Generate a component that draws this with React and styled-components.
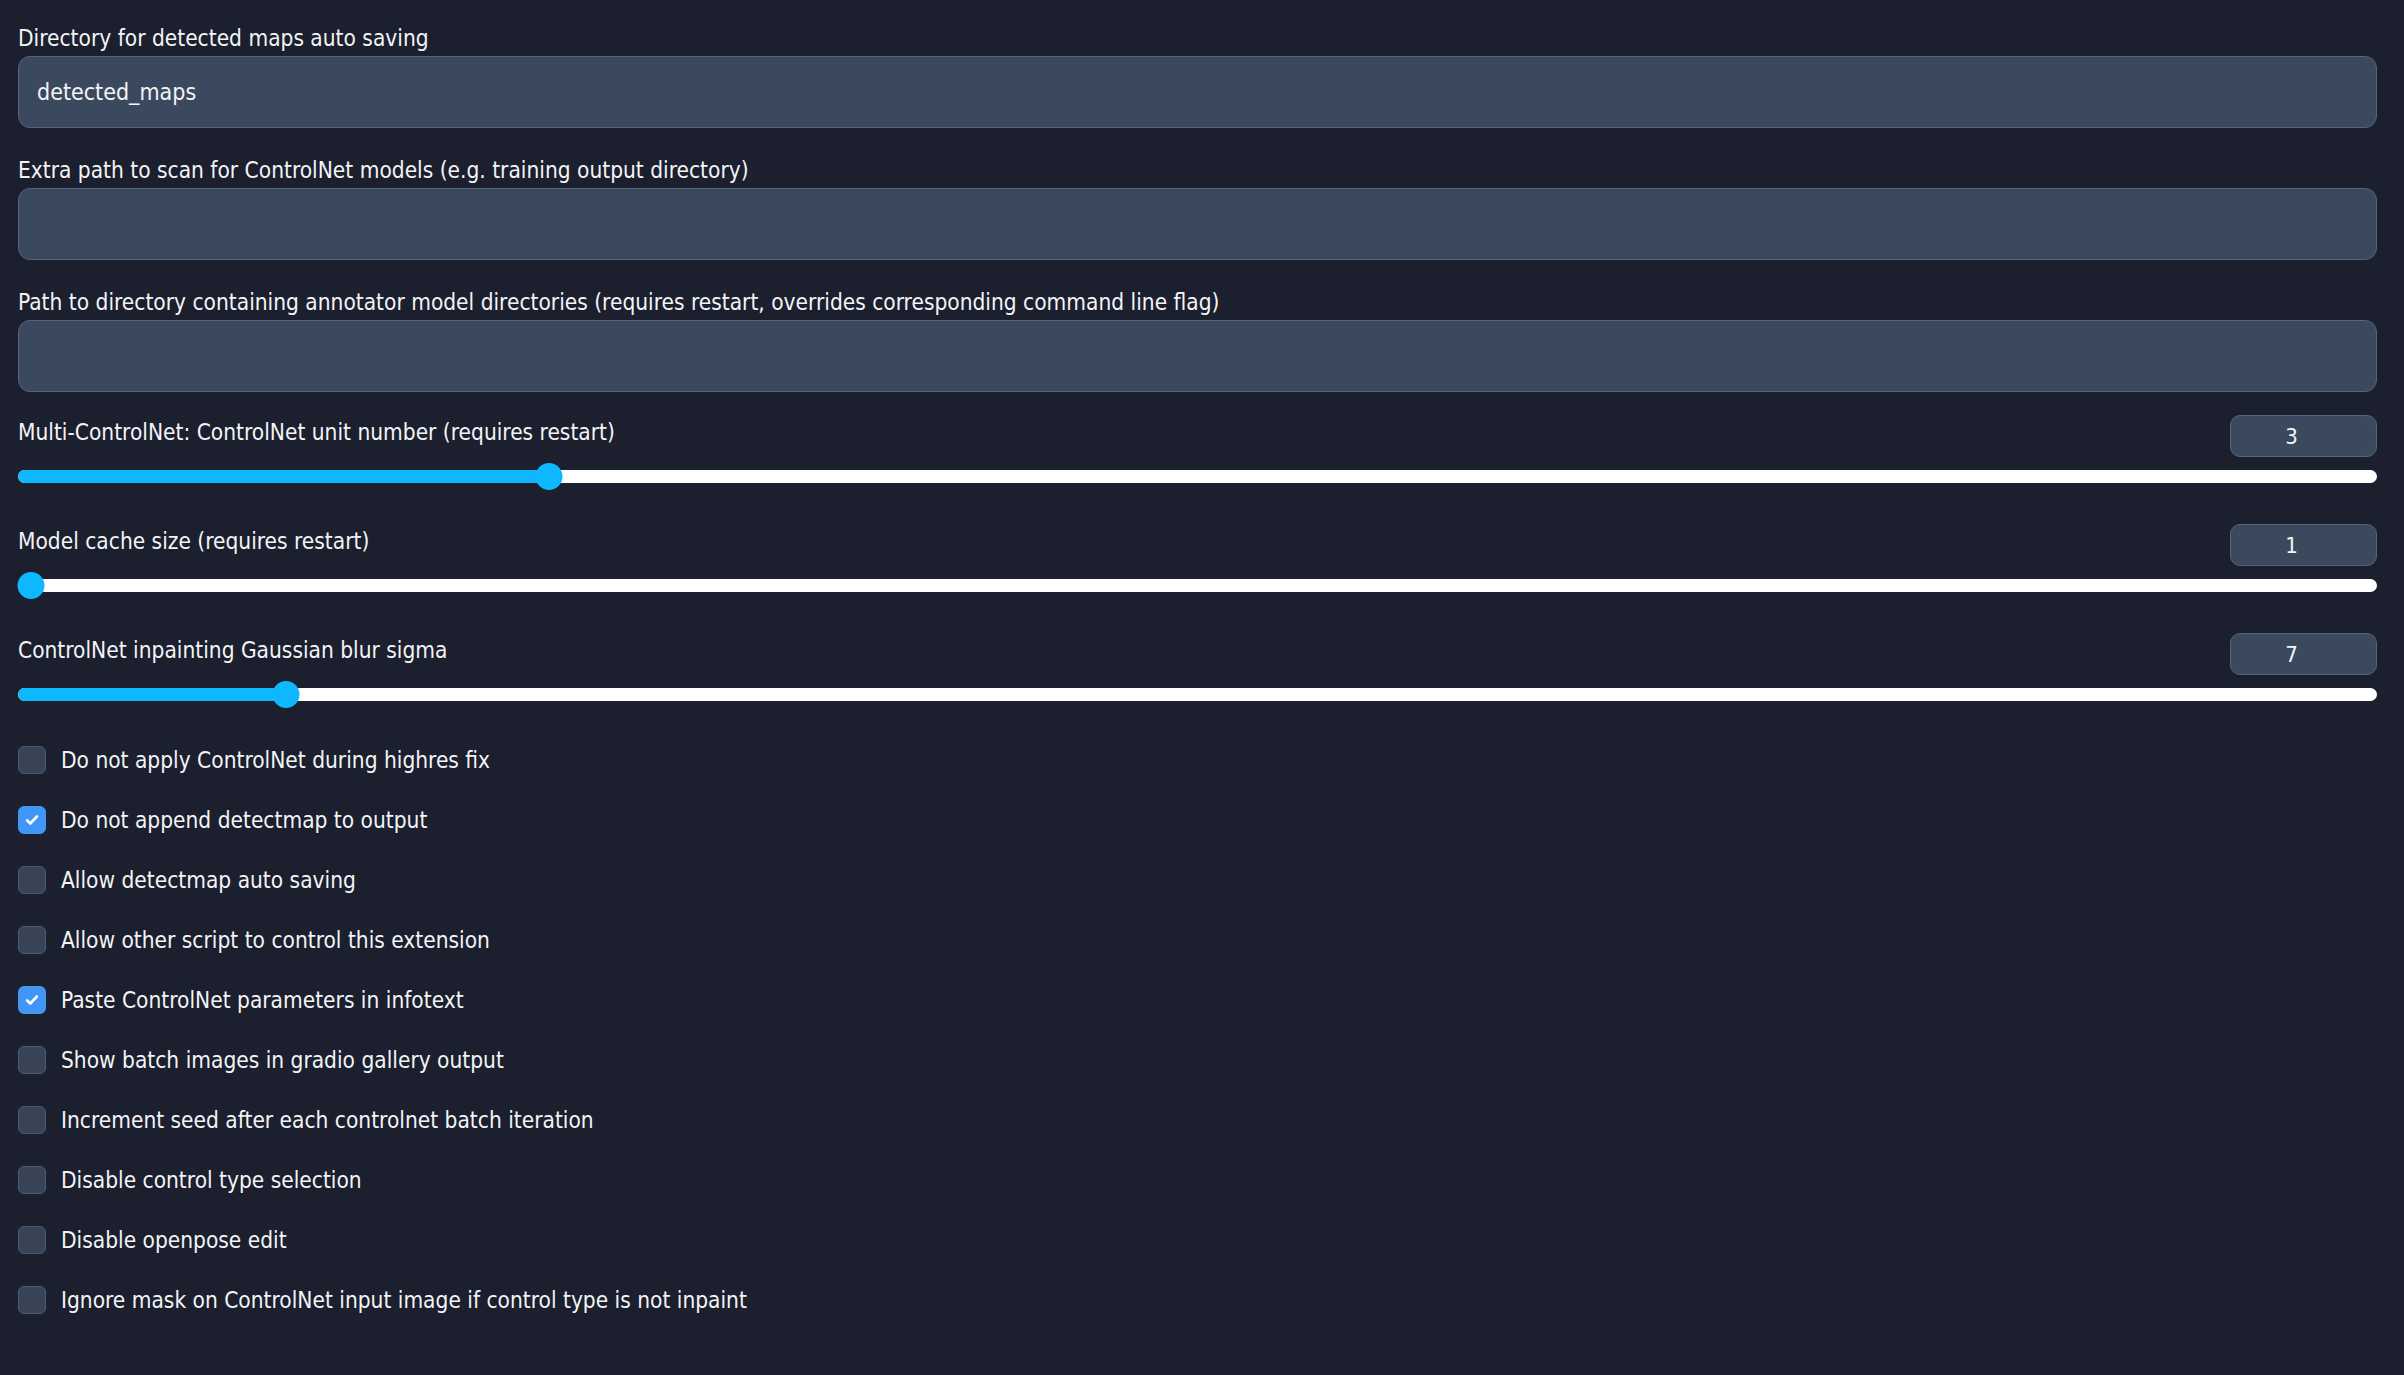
import React from 'react'
import styled, { createGlobalStyle } from 'styled-components'

const GlobalStyle = createGlobalStyle`
  body {
    margin: 0;
    background: #1b1f2e;
    color: #f3f4f6;
    font-family: "Liberation Sans Narrow", "DejaVu Sans Condensed", "Liberation Sans", sans-serif;
  }
`

const textFields = [
  { label: 'Directory for detected maps auto saving', value: 'detected_maps' },
  { label: 'Extra path to scan for ControlNet models (e.g. training output directory)', value: '' },
  {
    label:
      'Path to directory containing annotator model directories (requires restart, overrides corresponding command line flag)',
    value: '',
  },
]

const sliders = [
  { label: 'Multi-ControlNet: ControlNet unit number (requires restart)', value: 3, min: 1, max: 10 },
  { label: 'Model cache size (requires restart)', value: 1, min: 1, max: 10 },
  { label: 'ControlNet inpainting Gaussian blur sigma', value: 7, min: 0, max: 64 },
]

const checks = [
  { label: 'Do not apply ControlNet during highres fix', checked: false },
  { label: 'Do not append detectmap to output', checked: true },
  { label: 'Allow detectmap auto saving', checked: false },
  { label: 'Allow other script to control this extension', checked: false },
  { label: 'Paste ControlNet parameters in infotext', checked: true },
  { label: 'Show batch images in gradio gallery output', checked: false },
  { label: 'Increment seed after each controlnet batch iteration', checked: false },
  { label: 'Disable control type selection', checked: false },
  { label: 'Disable openpose edit', checked: false },
  { label: 'Ignore mask on ControlNet input image if control type is not inpaint', checked: false },
]

const App = () => {
  return (
    <>
      <GlobalStyle />
      <Page>
        <FieldGroup>
          {textFields.map(f => (
            <Field key={f.label}>
              <Label>{f.label}</Label>
              <TextInput type="text" defaultValue={f.value} />
            </Field>
          ))}
        </FieldGroup>

        <SliderGroup>
          {sliders.map(s => {
            const frac = (s.value - s.min) / (s.max - s.min)
            return (
              <Slider key={s.label}>
                <SliderHeader>
                  <SliderLabel>{s.label}</SliderLabel>
                  <NumberBox>{s.value}</NumberBox>
                </SliderHeader>
                <TrackArea>
                  <Rail>
                    <Fill style={{ width: `calc(13px + ${frac} * (100% - 26px))` }} />
                  </Rail>
                  <Thumb style={{ left: `calc(13px + ${frac} * (100% - 26px))` }} />
                </TrackArea>
              </Slider>
            )
          })}
        </SliderGroup>

        <CheckList>
          {checks.map(c => (
            <CheckRow key={c.label}>
              <Box $checked={c.checked}>
                {c.checked && (
                  <svg width="16" height="16" viewBox="0 0 16 16">
                    <path
                      d="M3.2 8.4 L6.4 11.4 L12.8 4.6"
                      fill="none"
                      stroke="#fff"
                      strokeWidth="2.8"
                      strokeLinecap="round"
                      strokeLinejoin="round"
                    />
                  </svg>
                )}
              </Box>
              <CheckLabel>{c.label}</CheckLabel>
            </CheckRow>
          ))}
        </CheckList>
      </Page>
    </>
  )
}

export default App

const Page = styled.div`
  display: flex;
  flex-direction: column;
  padding: 24px 27px 60px 18px;
  min-height: 1375px;
  box-sizing: border-box;
`

const FieldGroup = styled.div`
  display: flex;
  flex-direction: column;
  gap: 28px;
`

const Field = styled.div`
  display: flex;
  flex-direction: column;
  gap: 4px;
`

const Label = styled.span`
  font-size: 22.5px;
  line-height: 28px;
  color: #f3f4f6;
`

const TextInput = styled.input`
  box-sizing: border-box;
  height: 72px;
  width: 100%;
  padding: 0 18px;
  border: 1px solid #56637a;
  border-radius: 12px;
  background: #3b495e;
  color: #f3f4f6;
  font-family: inherit;
  font-size: 23px;
  outline: none;
`

const SliderGroup = styled.div`
  display: flex;
  flex-direction: column;
  gap: 34px;
  margin-top: 23px;
`

const Slider = styled.div`
  display: flex;
  flex-direction: column;
  gap: 6px;
`

const SliderHeader = styled.div`
  display: flex;
  justify-content: space-between;
  align-items: flex-start;
`

const SliderLabel = styled(Label)`
  margin-top: 3px;
`

const NumberBox = styled.div`
  box-sizing: border-box;
  width: 147px;
  height: 42px;
  display: flex;
  align-items: center;
  justify-content: center;
  padding-right: 24px;
  border: 1px solid #56637a;
  border-radius: 10px;
  background: #3b495e;
  font-size: 22px;
  color: #f3f4f6;
`

const TrackArea = styled.div`
  position: relative;
  height: 27px;
  display: flex;
  align-items: center;
`

const Rail = styled.div`
  flex: 1;
  height: 13px;
  border-radius: 7px;
  background: #ffffff;
  overflow: hidden;
`

const Fill = styled.div`
  height: 100%;
  background: #0db8ff;
`

const Thumb = styled.div`
  position: absolute;
  top: 0;
  width: 27px;
  height: 27px;
  border-radius: 50%;
  background: #0db8ff;
  transform: translateX(-50%);
`

const CheckList = styled.div`
  display: flex;
  flex-direction: column;
  gap: 32px;
  margin-top: 38px;
`

const CheckRow = styled.label`
  display: flex;
  align-items: center;
  gap: 15px;
`

const Box = styled.span`
  box-sizing: border-box;
  width: 28px;
  height: 28px;
  flex-shrink: 0;
  display: flex;
  align-items: center;
  justify-content: center;
  border-radius: 6px;
  border: 1px solid ${p => (p.$checked ? '#4096f6' : '#4f5a6e')};
  background: ${p => (p.$checked ? '#4096f6' : '#374357')};
`

const CheckLabel = styled.span`
  font-size: 22.5px;
  line-height: 28px;
  color: #f3f4f6;
`
